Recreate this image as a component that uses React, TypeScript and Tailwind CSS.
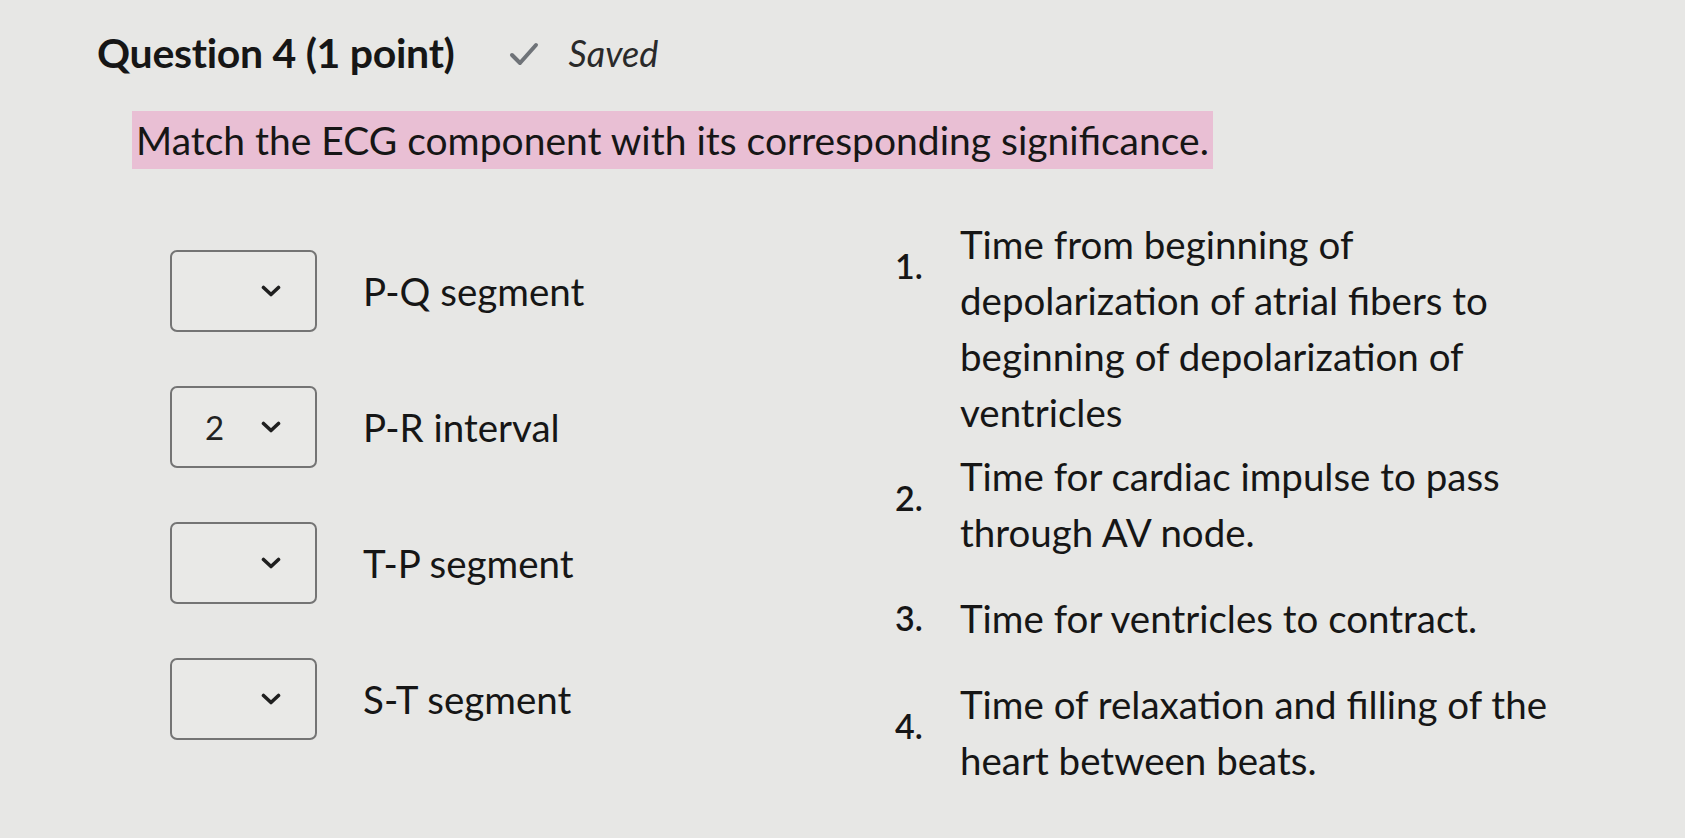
import { useState } from "react";

// ─── Data ─────────────────────────────────────────────────────────────────────

interface Prompt {
  id: string;
  label: string;
  value: string;
}

interface Choice {
  n: number;
  text: string;
  multi: boolean;
  gap: string;
}

const PROMPTS: Prompt[] = [
  { id: "pq", label: "P-Q segment", value: "" },
  { id: "pr", label: "P-R interval", value: "2" },
  { id: "tp", label: "T-P segment", value: "" },
  { id: "st", label: "S-T segment", value: "" },
];

const CHOICES: Choice[] = [
  {
    n: 1,
    text: "Time from beginning of depolarization of atrial fibers to beginning of depolarization of ventricles",
    multi: true,
    gap: "mt-0",
  },
  { n: 2, text: "Time for cardiac impulse to pass through AV node.", multi: true, gap: "mt-[8px]" },
  { n: 3, text: "Time for ventricles to contract.", multi: false, gap: "mt-[30px]" },
  { n: 4, text: "Time of relaxation and filling of the heart between beats.", multi: true, gap: "mt-[30px]" },
];

// ─── Icons ────────────────────────────────────────────────────────────────────

const Chevron = () => (
  <svg width="20" height="12" viewBox="0 0 20 12" fill="none">
    <path d="M2.5 2.5l7.5 7 7.5-7" stroke="#1f1f1f" strokeWidth="3.6" strokeLinecap="round" strokeLinejoin="round" />
  </svg>
);

const Check = () => (
  <svg width="30" height="24" viewBox="0 0 30 24" fill="none">
    <path d="M3 13l8 8L27 3" stroke="#6f7378" strokeWidth="4" strokeLinecap="round" strokeLinejoin="round" />
  </svg>
);

// ─── Select box ───────────────────────────────────────────────────────────────

function MatchSelect({ value }: { value: string }) {
  return (
    <div className="flex h-[82px] w-[147px] shrink-0 items-center rounded-[7px] border-2 border-[#747474] bg-[#e9e9e7] pl-[33px] pr-[34px]">
      <span className="w-[19px] text-[33px] leading-none text-[#222]">{value}</span>
      <span className="ml-auto flex">
        <Chevron />
      </span>
    </div>
  );
}

// ─── Page ─────────────────────────────────────────────────────────────────────

export default function App() {
  const [prompts] = useState(PROMPTS);

  return (
    <div className="h-[838px] w-[1685px] overflow-hidden bg-[#e7e7e5] font-['Lato','Liberation_Sans',sans-serif] text-[#161616]">
      {/* Header */}
      <div className="flex items-center pl-[97px] pt-[27px]">
        <h1 className="text-[41px] font-bold leading-[52px] tracking-[-0.3px]">Question 4 (1 point)</h1>
        <span className="ml-[54px] mt-[2px] flex">
          <Check />
        </span>
        <span className="ml-[30px] text-[36px] italic leading-[52px] text-[#2a2a2a]">Saved</span>
      </div>

      {/* Prompt */}
      <div className="mt-[32px] pl-[132px]">
        <p className="inline-block bg-[#e9bfd4] px-[4px] text-[39px] leading-[58px]">
          Match the ECG component with its corresponding significance.
        </p>
      </div>

      <div className="mt-[47px] flex">
        {/* Left column: selects */}
        <div className="flex w-[895px] flex-col gap-[54px] pl-[170px] pt-[34px]">
          {prompts.map((p) => (
            <div key={p.id} className="flex items-center">
              <MatchSelect value={p.value} />
              <span className="ml-[46px] text-[38.5px] leading-none">{p.label}</span>
            </div>
          ))}
        </div>

        {/* Right column: numbered answers */}
        <ol className="flex flex-col">
          {CHOICES.map((c) => (
            <li key={c.n} className={`flex ${c.gap}`}>
              <span
                className={`w-[65px] shrink-0 text-[34px] font-semibold leading-[56px] ${c.multi ? "mt-[22px]" : ""}`}
              >
                {c.n}.
              </span>
              <span className="w-[592px] text-[38.5px] leading-[56px]">{c.text}</span>
            </li>
          ))}
        </ol>
      </div>
    </div>
  );
}
